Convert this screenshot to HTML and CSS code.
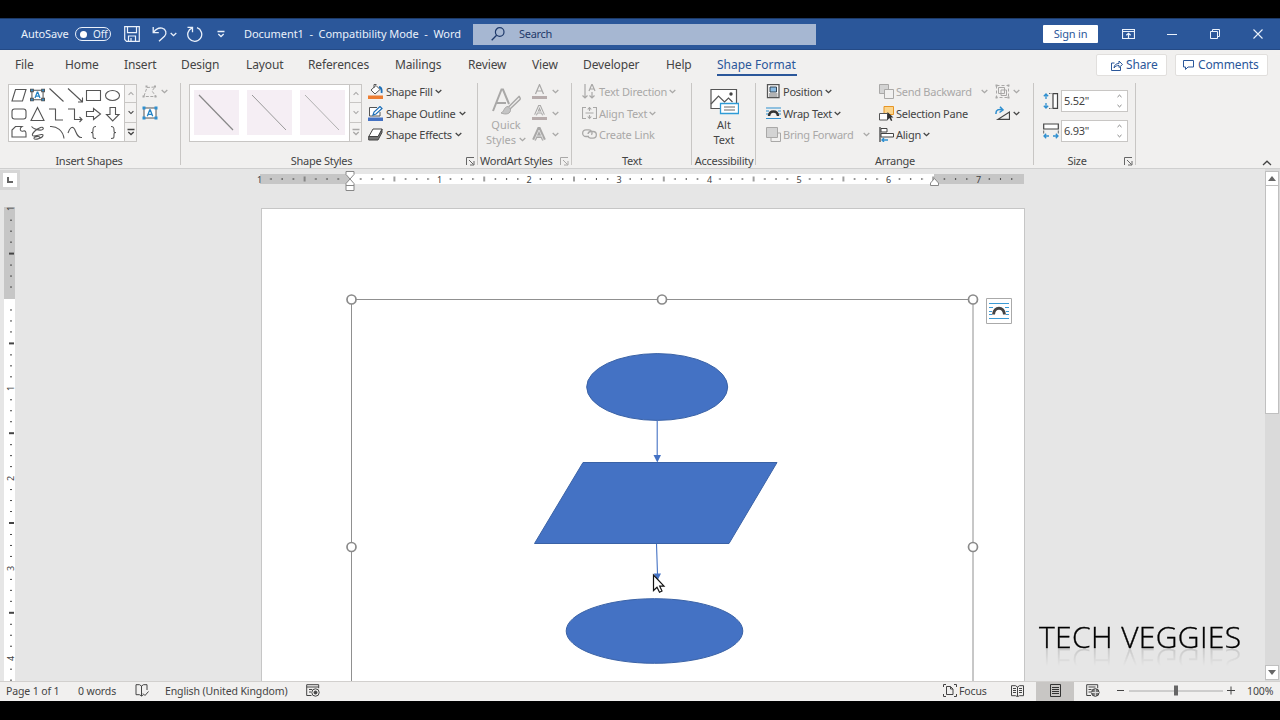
FILE: index.html
```html
<!DOCTYPE html>
<html lang="en">
<head>
<meta charset="utf-8">
<title>Document1 - Compatibility Mode - Word</title>
<link rel="stylesheet" href="styles.css">
</head>
<body>
<svg class="defs" width="0" height="0">
  <symbol id="caret" viewBox="0 0 7 5"><path d="M.7 1 3.5 3.7 6.3 1" fill="none" stroke="currentColor" stroke-width="1.3"/></symbol>
  <symbol id="up" viewBox="0 0 7 5"><path d="M.7 4 3.5 1.3 6.3 4" fill="none" stroke="currentColor" stroke-width="1.3"/></symbol>
  <symbol id="more" viewBox="0 0 8 8"><path d="M.5 1.5h7M1.3 4 4 6.5 6.7 4" fill="none" stroke="currentColor" stroke-width="1.3"/></symbol>
  <symbol id="launch" viewBox="0 0 9 9"><path d="M.5 8V.5H8M3 3l4.5 4.5M8 4v4H4" fill="none" stroke="currentColor"/></symbol>
  <symbol id="textbox" viewBox="0 0 16 14"><path d="M2 2h12v10H2z" fill="#fff" stroke="#555"/><g fill="#2e8fd0"><path d="M.5.5h3v3h-3zM12.500.5h3v3h-3zM.5 10.500h3v3h-3zM12.500 10.500h3v3h-3z"/></g><path d="M5.300 10.300 7.700 4h.6l2.400 6.300M6.300 8.300h3.400" fill="none" stroke="#2484c6" stroke-width="1.300"/></symbol>
</svg>

<div class="app">
  <header class="titlebar">
    <span class="autosave">AutoSave</span>
    <span class="toggle"><i></i>Off</span>
    <svg width="16" height="16" viewBox="0 0 16 16"><path d="M.7.7h14.6v14.6H2.5L.7 13.5zM3.5.7v6h9v-6M4.5 15v-5h7v5M7 15v-3" fill="none" stroke="currentColor" stroke-width="1.2"/></svg>
    <svg width="16" height="16" viewBox="0 0 16 16"><path d="M1.2 1v5.6h5.6M1.5 6.3C4 3 7 1.5 10 2.2c4 1 5.200 5 2.500 8L7 15.200" fill="none" stroke="currentColor" stroke-width="1.3"/></svg>
    <svg width="7" height="5"><use href="#caret"/></svg>
    <svg width="17" height="16" viewBox="0 0 17 16"><path d="M1.500 1.300h5v5M6.200 1.800A7 7 0 1 0 11 1.700" fill="none" stroke="currentColor" stroke-width="1.300"/></svg>
    <svg width="8" height="8"><use href="#more"/></svg>
    <span class="doctitle">Document1&nbsp; -&nbsp; Compatibility Mode&nbsp; -&nbsp; Word</span>
    <div class="search">
      <svg width="14" height="14" viewBox="0 0 14 14"><circle cx="8.700" cy="5" r="4.300" fill="none" stroke="currentColor" stroke-width="1.200"/><path d="M5.600 8.200.7 13.200" stroke="currentColor" stroke-width="1.300"/></svg>
      <span>Search</span>
    </div>
    <span class="signin">Sign in</span>
    <svg width="13" height="10" viewBox="0 0 13 10"><path d="M.5.5h12v9H.5zM.5 2.500h12M6.500 9V4.500M4.300 6.300l2.200-2 2.200 2" fill="none" stroke="currentColor" stroke-width="1.200"/></svg>
    <svg width="10" height="10"><path d="M0 5.500h10" stroke="currentColor"/></svg>
    <svg width="10" height="10" viewBox="0 0 10 10"><path d="M.5 2.500h7v7h-7zM2.500 2.500v-2h7v7h-2" fill="none" stroke="currentColor"/></svg>
    <svg width="10" height="10" viewBox="0 0 10 10"><path d="m.5.5 9 9m0-9-9 9" stroke="currentColor" stroke-width="1.100"/></svg>
  </header>

  <nav class="tabs">
    <span>File</span><span>Home</span><span>Insert</span><span>Design</span><span>Layout</span><span>References</span><span>Mailings</span><span>Review</span><span>View</span><span>Developer</span><span>Help</span><span class="active">Shape Format</span>
    <span class="pill share"><svg width="12" height="11" viewBox="0 0 12 11"><path d="M3.500 3H.5v7.500h9V7M3 8c.2-3 2-4.500 5-4.500V1l3.500 3.500L8 7.500V5.500C6 5.500 4.500 6 3 8z" fill="none" stroke="currentColor"/></svg>Share</span>
    <span class="pill comments"><svg width="11" height="11" viewBox="0 0 11 11"><path d="M.5.5h10v6.500H5L2.500 9.500V7h-2z" fill="none" stroke="currentColor"/></svg>Comments</span>
  </nav>

  <section class="ribbon">
    <div class="group g-insert">
      <div class="body">
        <div class="gallery">
          <svg class="shapes" width="115" height="57" viewBox="0 0 115 57" fill="none" stroke="#555" stroke-width="1.100">
            <path d="M6.500 4.500h10.500l-3.500 11.500H3z"/>
            <path d="m40.500 3.500 14 13M59 3.500l14 13m.5-4v4.500h-4.500"/>
            <path d="M77.500 5.500h14v10h-14z"/><ellipse cx="103.500" cy="10.500" rx="7" ry="5"/>
            <rect x="3" y="24" width="14" height="10" rx="2.500"/>
            <path d="M28.500 22.500 35 35.500H22zM40 24h6.500v11H54M59 24h6.500v10.500H73m-2.500-2.500 2.500 2.500-2.500 2.500"/>
            <path d="M77.500 26.500h7v-3l7 5.500-7 5.500v-3h-7zM101 22.500h5.500v7h3.500L103.700 36 97.500 29.500h3.500z"/>
            <path d="M6.500 41.500h6.500c-3 2-2 5.500 1.500 4.500 2-.5 2.500 1 2.500 3v3H3V45z"/>
            <path d="M22.500 41.500c2 2.500 7 4 10 3.500 3-.7 2-3.500-1-2.500-4 1.300-9 6-8 8 1.300 2 10-2.500 10.500-.5.5 2.500-8 5.500-9 3.500-.7-1.700 5-3 6-1"/>
            <path d="M41 41.500c7-.5 13 4 14 12M59 48c2-6 4.500-7 6.500-4 2 4 3 9 7.500 8.500"/>
            <path d="M87 41.500c-3 0-3 1.500-3 3.500s0 2.500-2 2.500c2 0 2 .5 2 3s0 3 3 3M102 41.500c3 0 3 1.500 3 3.500s0 2.500 2 2.500c-2 0-2 .5-2 3s0 3-3 3"/>
            <use href="#textbox" x="21" y="3.500" width="15" height="13"/>
          </svg>
          <div class="steps"><b class="dim"><svg width="6" height="5"><use href="#up"/></svg></b><b><svg width="6" height="5"><use href="#caret"/></svg></b><b><svg width="8" height="8"><use href="#more"/></svg></b></div>
        </div>
        <div class="edit">
          <span class="dim"><svg width="16" height="13" viewBox="0 0 16 13"><path d="M2 11 5 2.500l8-.5-3 4 4 5.500H2" fill="none" stroke="currentColor" stroke-dasharray="3 1.500"/><path d="M3.500.5h2v2h-2zM12 .5h2v2h-2zM.5 10.500h2v2h-2zM12.500 10.500h2v2h-2z" fill="currentColor"/></svg><svg width="7" height="5"><use href="#caret"/></svg></span>
          <span><svg width="16" height="14"><use href="#textbox"/></svg></span>
        </div>
      </div>
      <div class="label">Insert Shapes</div>
    </div>

    <div class="group g-styles">
      <div class="body">
        <div class="gallery">
          <div class="thumbs">
            <svg width="45" height="45"><path d="m5 5 34 35" stroke="#888" stroke-width="1.200"/></svg>
            <svg width="45" height="45"><path d="m5 5 34 35" stroke="#999"/></svg>
            <svg width="45" height="45"><path d="m5 5 34 35" stroke="#b0b0b0"/></svg>
          </div>
          <div class="steps dim"><b><svg width="6" height="5"><use href="#up"/></svg></b><b><svg width="6" height="5"><use href="#caret"/></svg></b><b><svg width="8" height="8"><use href="#more"/></svg></b></div>
        </div>
        <div class="cmds">
          <span class="cmd"><svg width="15" height="15" viewBox="0 0 15 15"><path d="M0 11.500h15V15H0z" fill="#ed7d31"/><path d="m3 6 5-4.500 4 4L7 10zM6 4V.5h2.500" fill="#fff" stroke="#555"/><path d="M11 3c2.500.5 3 3 2.500 6" fill="none" stroke="#1d6fb8" stroke-width="1.800"/></svg><em>Shape Fill</em><svg width="7" height="5"><use href="#caret"/></svg></span>
          <span class="cmd"><svg width="15" height="15" viewBox="0 0 15 15"><path d="M0 11.500h15V15H0z" fill="#4472c4"/><path d="M9 1.500H1.500v8.500H12V6" fill="#fff" stroke="#555"/><path d="m5 9 1-3 6-5.500 2 2L8 8z" fill="#fff" stroke="#1d6fb8" stroke-width="1.200"/></svg><em>Shape Outline</em><svg width="7" height="5"><use href="#caret"/></svg></span>
          <span class="cmd"><svg width="15" height="13" viewBox="0 0 15 13"><path d="M.7 8.500v3.500h9.300l4-7.500V1l-4 7.500z" fill="#777" stroke="#444"/><path d="M.8 8.500 5 1h9l-4 7.500z" fill="#fff" stroke="#444"/></svg><em>Shape Effects</em><svg width="7" height="5"><use href="#caret"/></svg></span>
        </div>
      </div>
      <div class="label">Shape Styles</div>
      <svg class="launcher" width="9" height="9"><use href="#launch"/></svg>
    </div>

    <div class="group g-wordart dimmed">
      <div class="body">
        <div class="big">
          <svg width="29" height="27" viewBox="0 0 29 27" fill="none" stroke="currentColor"><path d="M1 23 9.500 1.500h1.500L17 16M4 15h10" stroke-width="2"/><path d="m27.500 8-11 11M28.500 11 18 21M27 8l1.500 3" stroke-width="1.500"/><path d="M16 18.500c-4 0-3.500 5-7 6.500 5 2 10 1 9.500-4z" fill="#c4c4c4"/></svg>
          <em>Quick</em><em>Styles <svg width="7" height="5"><use href="#caret"/></svg></em>
        </div>
        <div class="cmds">
          <span class="cmd"><svg width="15" height="16" viewBox="0 0 15 16"><path d="M0 12h15v3H0z" fill="#b7acac"/><path d="M3.500 10 7.500.5 11.500 10M5 7h5" fill="none" stroke="currentColor" stroke-width="1.200"/></svg><svg width="7" height="5"><use href="#caret"/></svg></span>
          <span class="cmd"><svg width="15" height="16" viewBox="0 0 15 16"><path d="M0 12h15v3H0z" fill="#b7acac"/><path d="M3.500 10 7.500 1 11.500 10M5 7h5" fill="none" stroke="currentColor" stroke-width="3"/><path d="M3.500 10 7.500 1 11.500 10M5 7h5" fill="none" stroke="#eee"/></svg><svg width="7" height="5"><use href="#caret"/></svg></span>
          <span class="cmd"><svg width="15" height="16" viewBox="0 0 15 16"><path d="M2 13 7 2l5 11M4.500 9h6" fill="none" stroke="currentColor" stroke-width="4"/><path d="M2.500 13 7 3l4.500 10M4.500 9h6" fill="none" stroke="#ddd"/></svg><svg width="7" height="5"><use href="#caret"/></svg></span>
        </div>
      </div>
      <div class="label">WordArt Styles</div>
      <svg class="launcher" width="9" height="9"><use href="#launch"/></svg>
    </div>

    <div class="group g-text dimmed">
      <div class="body"><div class="cmds">
        <span class="cmd"><svg width="15" height="15" viewBox="0 0 15 15" fill="none" stroke="currentColor"><path d="M3 0v14M.5 11.500 3 14l2.500-2.500M7 7l3-7 3 7M8 5h4M10 8v6M7.500 11.500 10 14l2.500-2.500" stroke-width="1.200"/></svg><em>Text Direction</em><svg width="7" height="5"><use href="#caret"/></svg></span>
        <span class="cmd"><svg width="15" height="13" viewBox="0 0 15 13" fill="none" stroke="currentColor"><path d="M4 .5H.5v11H4M11 .5h3.500v11H11M3.500 6h8M7.500 0v4M7.500 8v4M5.700 2.500l1.800-2 1.800 2M5.700 9.500l1.800 2 1.800-2" stroke-width="1.100"/></svg><em>Align Text</em><svg width="7" height="5"><use href="#caret"/></svg></span>
        <span class="cmd"><svg width="15" height="11" viewBox="0 0 15 11" fill="none" stroke="currentColor" stroke-width="1.300"><path d="M7 7.500H4a3.300 3.300 0 1 1 0-6.700h3a3.200 3.200 0 0 1 2.500 5M6 5a3 3 0 0 1 3-2.500h2a3.300 3.300 0 1 1 0 6.700H8.500A3 3 0 0 1 6 7"/></svg><em>Create Link</em></span>
      </div></div>
      <div class="label">Text</div>
    </div>

    <div class="group g-alt">
      <div class="body"><div class="big">
        <svg width="29" height="27" viewBox="0 0 29 27"><path d="M1 1.500h25.500v19H1z" fill="#fff" stroke="#555" stroke-width="1.200"/><path d="m1 16 7.500-8 6 6 4-4 4 4" fill="none" stroke="#555" stroke-width="1.200"/><circle cx="21" cy="6" r="1.700" fill="#444"/><path d="M10.500 15.500h18v10h-18z" fill="#fff" stroke="#2f9bd6" stroke-width="1.300"/><path d="M14 19h11M14 22h11" stroke="#666"/></svg>
        <em>Alt</em><em>Text</em>
      </div></div>
      <div class="label">Accessibility</div>
    </div>

    <div class="group g-arrange">
      <div class="body">
        <div class="cmds c1">
          <span class="cmd"><svg width="15" height="15" viewBox="0 0 15 15"><path d="M1.500.7h11.500v13H1.500z" fill="#fff" stroke="#555" stroke-width="1.300"/><path d="M4 3h6.500v5H4z" fill="#8abbe2" stroke="#345"/><path d="M3 10h8.500M3 12h8.500" stroke="#666"/></svg><em>Position</em><svg width="7" height="5"><use href="#caret"/></svg></span>
          <span class="cmd"><svg width="15" height="13" viewBox="0 0 15 13"><path d="M0 1h15M0 4h3m9 0h3M0 7h3m9 0h3M0 11.500h15" stroke="#2e8fd0" stroke-width="1.200"/><path d="M3 9c.5-6 8.500-6 9 0" fill="none" stroke="#333" stroke-width="2.500"/></svg><em>Wrap Text</em><svg width="7" height="5"><use href="#caret"/></svg></span>
          <span class="cmd dim"><svg width="15" height="15" viewBox="0 0 15 15"><path d="M.5.5h11v10H.5z" fill="#d3d3d3" stroke="currentColor"/><path d="M5 11v3.500h9.500V6H12" fill="none" stroke="currentColor"/></svg><em>Bring Forward</em><svg width="7" height="5"><use href="#caret"/></svg></span>
        </div>
        <div class="cmds c2">
          <span class="cmd dim"><svg width="15" height="15" viewBox="0 0 15 15"><path d="M.5.5h9v9h-9z" fill="#d3d3d3" stroke="currentColor"/><path d="M5.500 5.500h9v9h-9z" fill="#f1f0ef" stroke="currentColor"/></svg><em>Send Backward</em><svg width="7" height="5"><use href="#caret"/></svg></span>
          <span class="cmd"><svg width="15" height="15" viewBox="0 0 15 15"><path d="M5 .5h9.500v8H5z" fill="#fbd58c" stroke="#e79525"/><path d="M.5 7.500h8v6.500h-8z" fill="#fff" stroke="#555"/><path d="M8.500 6v8l2-2 1.500 3 1.300-.6L12 11.500h2.500z" fill="#333"/></svg><em>Selection Pane</em></span>
          <span class="cmd"><svg width="15" height="15" viewBox="0 0 15 15" fill="none" stroke="#444"><path d="M1 0v15" stroke-width="1.300"/><path d="M2 1.500h6v3.500H2zM2 6.500h12.500v3.500H2z" fill="#fff"/><path d="M3 13h6M5 11l-2 2 2 2" stroke="#2e8fd0" stroke-width="1.400"/></svg><em>Align</em><svg width="7" height="5"><use href="#caret"/></svg></span>
        </div>
        <div class="cmds c3">
          <span class="cmd dim"><svg width="15" height="15" viewBox="0 0 15 15" fill="none" stroke="currentColor"><path d="M1.500 1.500h12v12h-12z" stroke-dasharray="3 2"/><path d="M.5.5h2v2h-2zM12.500.5h2v2h-2zM.5 12.500h2v2h-2zM12.500 12.500h2v2h-2z" fill="currentColor" stroke="none"/><path d="M3.500 3.500h6v6h-6zM6 6h5.500v5.500H6z"/></svg><svg width="7" height="5"><use href="#caret"/></svg></span>
          <span class="cmd"><svg width="15" height="15" viewBox="0 0 15 15" fill="none"><path d="M3 13.300h11.500V6z" stroke="#444" stroke-width="1.200"/><path d="M1 8C.5 4 4 2.500 7.500 4M5 .8 8 4 4.500 6.500" stroke="#2e8fd0" stroke-width="1.500"/></svg><svg width="7" height="5"><use href="#caret"/></svg></span>
        </div>
      </div>
      <div class="label">Arrange</div>
    </div>

    <div class="group g-size">
      <div class="body">
        <div class="field"><svg width="16" height="16" viewBox="0 0 16 16" fill="none"><path d="M3 1v5M3 10v5M.8 3.200 3 1l2.200 2.200M.8 12.800 3 15l2.200-2.200" stroke="#2e8fd0" stroke-width="1.300"/><path d="M6 .5h3M6 15.500h3" stroke="#666" stroke-dasharray="1.500 1"/><path d="M10 .7h4.500v14.600H10z" fill="#fff" stroke="#444" stroke-width="1.200"/></svg><div class="input"><em>5.52"</em><span class="spin"><svg width="5" height="4"><use href="#up"/></svg><svg width="5" height="4"><use href="#caret"/></svg></span></div></div>
        <div class="field"><svg width="16" height="16" viewBox="0 0 16 16" fill="none"><path d="M.7 1h14.600v5H.7z" fill="#fff" stroke="#444" stroke-width="1.200"/><path d="M.7 7.500v3M15.300 7.500v3" stroke="#666"/><path d="M1 13h5M10 13h5M3.200 10.800 1 13l2.200 2.200M12.800 10.800 15 13l-2.200 2.200" stroke="#2e8fd0" stroke-width="1.300"/></svg><div class="input"><em>6.93"</em><span class="spin"><svg width="5" height="4"><use href="#up"/></svg><svg width="5" height="4"><use href="#caret"/></svg></span></div></div>
      </div>
      <div class="label">Size</div>
      <svg class="launcher" width="9" height="9"><use href="#launch"/></svg>
    </div>
    <svg class="collapse" width="10" height="6"><path d="M1 5 5 1.200 9 5" fill="none" stroke="currentColor" stroke-width="1.300"/></svg>
  </section>

  <main class="work">
    <div class="left">
      <div class="tabstop"><svg width="6" height="6"><path d="M1 0v5h5" fill="none" stroke="#666" stroke-width="2"/></svg></div>
      <svg class="vruler" width="11" height="474">
        <defs><pattern id="vt" x="0" y="91.500" width="11" height="89.800" patternUnits="userSpaceOnUse"><path d="M6 11.200h2M6 22.400h2M6 33.700h2M4.500 44.900h5M6 56.100h2M6 67.300h2M6 78.600h2" stroke="#444"/></pattern></defs>
        <path d="M0 0h11v92H0z" fill="#c6c6c6"/><path d="M0 92h11v382H0z" fill="#fff"/>
        <rect width="11" height="474" fill="url(#vt)"/>
        <g><text transform="translate(9.500 4)rotate(-90)">1</text><text transform="translate(9.500 184)rotate(-90)">1</text><text transform="translate(9.500 274)rotate(-90)">2</text><text transform="translate(9.500 364)rotate(-90)">3</text><text transform="translate(9.500 454)rotate(-90)">4</text></g>
      </svg>
    </div>
    <div class="center">
      <svg class="hruler" width="768" height="22">
        <defs><pattern id="ht" x="92.500" y="0" width="89.800" height="14" patternUnits="userSpaceOnUse"><path d="M11.200 7v2M22.400 7v2M33.700 7v2M44.900 5.500v5M56.100 7v2M67.300 7v2M78.600 7v2" stroke="#444"/></pattern></defs>
        <path d="M3 3h764v10H3z" fill="#c6c6c6"/><path d="M93 3h584v10H93z" fill="#fff"/>
        <rect x="5" width="757" height="14" fill="url(#ht)"/>
        <g text-anchor="middle"><text x="2.500" y="11.500">1</text><text x="182.500" y="11.500">1</text><text x="272" y="11.500">2</text><text x="362" y="11.500">3</text><text x="452.500" y="11.500">4</text><text x="542" y="11.500">5</text><text x="631.500" y="11.500">6</text><text x="721.500" y="11.500">7</text></g>
        <path d="M89 .5h8v3L93 8l-4-4.500zM89 12.500 93 8l4 4.500v7h-8zM89 14.500h8M673.500 14.500v-2.500l4-4.500 4 4.500v2.500z" fill="#fff" stroke="#888"/>
      </svg>
      <div class="page">
        <svg width="762" height="472" viewBox="262 209 762 472">
          <path d="M351.500 690V299.500H973V690" fill="none" stroke="#909090"/>
          <g fill="#fff" stroke="#8a8a8a" stroke-width="1.700"><circle cx="351.500" cy="299.500" r="4.500"/><circle cx="662" cy="299.500" r="4.500"/><circle cx="973" cy="299.500" r="4.500"/><circle cx="351.500" cy="547" r="4.500"/><circle cx="973" cy="547" r="4.500"/></g>
          <g fill="#4472c4" stroke="#3a62a6"><ellipse cx="657.200" cy="387" rx="70.500" ry="33.400"/><path d="M583 462.500h194L729 543.500H534.500z"/><ellipse cx="654.500" cy="631" rx="88.300" ry="32.300"/></g>
          <path d="M657.200 421v35M656.500 544l1 30" stroke="#4472c4" stroke-width="1.100"/>
          <path d="M653.500 455h7.500l-3.700 7.500zM653.700 573.500h7.300l-3.500 7z" fill="#4472c4"/>
          <path d="M986.500 298.500h25v25h-25z" fill="#fff" stroke="#aaa"/>
          <path d="M989 303.500h20M989 307.500h4M1005 307.500h4M989 311.500h3M1006 311.500h3M989 314.500h3M1006 314.500h3M989 318.500h20" stroke="#3b9ad5" stroke-width="1.200"/>
          <path d="M993.500 314.500c.5-8.500 10.500-8.500 11 0" fill="none" stroke="#444" stroke-width="3"/>
          <path d="M653.500 575v15.500l3.500-3.300 2.500 5 2.500-1.200-2.300-4.800h4.300z" fill="#fff" stroke="#111" stroke-width="1.200"/>
        </svg>
      </div>
    </div>
    <div class="watermark">TECH VEGGIES</div>
    <div class="scroll"><b><svg width="8" height="5"><path d="M0 5 4 0l4 5z" fill="#666"/></svg></b><i></i><b class="down"><svg width="8" height="5"><path d="m0 0 4 5 4-5z" fill="#666"/></svg></b></div>
  </main>

  <footer class="status">
    <span>Page 1 of 1</span><span>0 words</span>
    <svg width="14" height="13" viewBox="0 0 14 13" fill="none" stroke="currentColor"><path d="M6.500 2 4.500.7H1v10h3.500l2 1.300zM6.500 2 8.500.7H12V6M6.500 12l2-1.300M8 9.500l2 2 3.500-4"/></svg>
    <span>English (United Kingdom)</span>
    <svg width="14" height="13" viewBox="0 0 14 13" fill="none" stroke="currentColor"><path d="M5.500 11.500H.7V.7h12v3.500M.7 3h12M3 5.500h3M3 8h2"/><circle cx="9.500" cy="8.500" r="3.700"/><circle cx="9.500" cy="8.500" r="1.500" fill="currentColor"/></svg>
    <span class="focus"><svg width="14" height="13" viewBox="0 0 14 13" fill="none" stroke="currentColor"><path d="M3 .5H.5V3M11 .5h2.500V3M.5 10v2.500H3M13.500 10v2.500H11M3.500 2.500h4L10 5v5.500H3.500zM7.500 2.500V5H10"/></svg><em>Focus</em></span>
    <span class="view"><svg width="13" height="12" viewBox="0 0 13 12" fill="none" stroke="currentColor"><path d="M6.500 2 4.500.7H.5v10h4l2 1 2-1h4V.7h-4zM6.500 2v9.500M2 3.500h3M2 5.500h3M2 7.500h3M8 3.500h3M8 5.500h3M8 7.500h3"/></svg></span>
    <span class="view on"><svg width="11" height="13" viewBox="0 0 11 13" fill="none" stroke="#333"><path d="M.5.5h10v12H.5zM2 3.500h7M2 5.500h7M2 7.500h7M2 9.500h7"/></svg></span>
    <span class="view"><svg width="14" height="13" viewBox="0 0 14 13" fill="none" stroke="currentColor"><path d="M5 11.500H.7V.7h11v3.500M2.500 3h7M2.500 5.500h3M2.500 8h2.500"/><circle cx="9.300" cy="8.500" r="3.800" fill="#777"/><path d="M5.500 8.500H13M9.300 5v7" stroke="#ddd"/></svg></span>
    <svg class="zoom" width="119" height="13" viewBox="0 0 119 13"><path d="M0 6.500h7M110 6.500h8M114 2.500v8" stroke="#444"/><path d="M12 7h94" stroke="#aaa"/><path d="M57 1.500h4v10h-4z" fill="#666"/></svg>
    <span>100%</span>
  </footer>
</div>
</body>
</html>
```
FILE: styles.css
```css
* { box-sizing: border-box; }
body { margin: 0; background: #000; font-family: "Noto Sans", "Open Sans", sans-serif; font-size: 12px; color: #444; overflow: hidden; }
em { font-style: normal; }
svg { display: block; flex: none; }
.defs { position: absolute; }
.app { width: 1280px; height: 720px; padding: 18px 0 19px; display: flex; flex-direction: column; white-space: nowrap; line-height: 16px; }

.titlebar { height: 32px; flex: none; background: #2b579a; border-top: 1px solid #1c3a68; border-bottom: 1px solid #244a86; color: #eaf1fb; padding-left: 21px; display: grid; align-items: center; grid-template-columns: 54px 49px 28px 18px 16px 31px 27px 229px 570px 79px 45px 43px 43px 20px; }
.autosave { font-size: 11px; letter-spacing: -.1px; }
.toggle { width: 36px; height: 14px; border: 1px solid #eaf1fb; border-radius: 8px; display: flex; align-items: center; gap: 6px; padding-left: 4px; font-size: 10px; line-height: 12px; }
.toggle i { width: 7px; height: 7px; border-radius: 50%; background: #fff; }
.doctitle { font-size: 11px; letter-spacing: -.05px; }
.search { width: 343px; height: 21px; background: #a6b7d2; color: #1f3a6b; display: flex; align-items: center; padding-left: 18px; gap: 14px; font-size: 11px; letter-spacing: -.3px; }
.signin { width: 55px; height: 18px; background: #fff; color: #2b579a; text-align: center; line-height: 18px; font-size: 11px; letter-spacing: -.2px; border-radius: 1px; }

.tabs { height: 30px; flex: none; background: #f1f0ef; padding-left: 15px; display: grid; grid-template-columns: 50px 59px 57px 65px 62px 87px 73px 64px 51px 83px 51px 379px 79px 93px; align-items: start; letter-spacing: -.13px; }
.tabs > span { padding-top: 7px; justify-self: start; height: 26px; }
.tabs .active { color: #2b579a; border-bottom: 2px solid #2b579a; width: 80px; letter-spacing: 0; }
.tabs .pill { margin-top: 4px; padding: 0 0 0 14px; width: 71px; height: 22px; background: #fff; border: 1px solid #e1dfdd; border-radius: 2px; color: #2b579a; display: flex; align-items: center; gap: 3px; }
.tabs .comments { width: 93px; padding-left: 7px; gap: 4px; }

.ribbon { height: 89px; flex: none; background: #f1f0ef; border-bottom: 1px solid #cfcfcf; display: flex; position: relative; font-size: 11px; letter-spacing: -.26px; }
.group { position: relative; padding-top: 1px; flex: none; }
.group::after { content: ""; position: absolute; right: 0; top: 3px; width: 1px; height: 82px; background: #c8c6c4; }
.g-insert { width: 181px; } .g-styles { width: 297px; } .g-wordart { width: 94px; } .g-text { width: 120px; } .g-alt { width: 64px; } .g-arrange { width: 278px; } .g-size { width: 102px; }
.body { height: 71px; display: flex; }
.label { text-align: center; line-height: 18px; }
.g-insert .label { padding-right: 3px; }
.g-wordart .label { text-align: left; padding-left: 2px; }
.g-size .label { padding-right: 16px; }
.g-styles .label { padding-right: 16px; }
.launcher { position: absolute; right: 3px; top: 77px; color: #666; }
.dim, .dimmed .body, .dimmed .launcher { color: #a9a8a7; }
.gallery { display: flex; background: #fff; border: 1px solid #c8c6c4; height: 58px; margin-top: 3px; }
.g-insert .gallery { margin-left: 8px; width: 129px; }
.g-styles .gallery { margin-left: 8px; width: 173px; }
.steps { width: 14px; margin: -1px -1px -1px auto; display: grid; grid-template-rows: repeat(3, 1fr); }
.steps b { border: 1px solid #c8c6c4; border-top-width: 0; background: #f4f3f2; display: grid; place-items: center; }
.steps b:first-child { border-top-width: 1px; }
.edit { margin-left: 5px; display: flex; flex-direction: column; }
.edit span { height: 21.500px; display: flex; align-items: center; gap: 3px; }
.thumbs { display: flex; gap: 8px; padding: 5px 4px; }
.thumbs svg { background: #f5eef4; }
.cmds { display: flex; flex-direction: column; }
.cmd { height: 21.500px; display: flex; align-items: center; gap: 3px; }
.cmd em { padding-top: 1px; }
.g-styles .cmds { margin-left: 6px; }
.big { display: flex; flex-direction: column; align-items: center; padding-top: 7px; line-height: 15px; letter-spacing: 0; }
.big svg { margin-bottom: 2px; }
.big em { display: flex; align-items: center; gap: 3px; }
.big em svg { margin: 0; }
.g-wordart .big { width: 56px; }
.g-wordart .cmd { gap: 5px; margin-left: -2px; }
.g-text .cmds { padding-left: 10px; letter-spacing: -.2px; }
.g-alt .big { width: 64px; }
.c1 { margin-left: 10px; width: 112px; }
.c2 { width: 116px; }
.c1 .dim { width: 104px; }
.c2 .dim { width: 109px; }
.c1 .dim svg:last-child, .c2 .dim svg:last-child { margin-left: auto; }
.g-arrange .body, .g-text .body { gap: 1px; }
.g-arrange .cmd, .g-text .cmd { gap: 2px; }
.g-arrange .body .c3 .cmd { gap: 3px; margin-left: -1px; }
.g-size .body { flex-direction: column; padding: 9px 0 0 9px; gap: 9px; }
.field { display: flex; align-items: center; gap: 2px; height: 21px; }
.input { width: 67px; height: 22px; background: #fff; border: 1px solid #c8c6c4; display: flex; align-items: center; justify-content: space-between; padding: 0 5px 0 2px; }
.spin { display: grid; gap: 6px; color: #777; }
.collapse { position: absolute; right: 8px; bottom: 2px; }

.work { height: 512px; flex: none; background: #e6e6e6; display: flex; position: relative; overflow: hidden; }
.left { width: 257px; display: flex; flex-direction: column; gap: 17px; }
.tabstop { width: 20px; height: 20px; border: 3px solid #d6d6d6; background: #fff; display: grid; place-items: center; margin-top: 1px; }
.vruler { margin-left: 4px; }
.vruler, .hruler rect { shape-rendering: crispEdges; }
.vruler text, .hruler text { font-family: "Noto Sans", sans-serif; font-size: 9px; fill: #444; }
.center { width: 767px; padding-top: 2px; }
.page { margin: 15px 0 0 4px; width: 764px; height: 474px; background: #fff; border: 1px solid #c6c6c6; }
.hruler { overflow: visible; }
.watermark { position: absolute; left: 1039px; top: 448px; font-family: "Open Sans", sans-serif; font-weight: 300; font-size: 30px; line-height: 40px; letter-spacing: .37px; color: #000; -webkit-text-stroke: .35px #000; -webkit-box-reflect: below -17px linear-gradient(transparent 35%, rgba(0,0,0,.2)); }
.scroll { width: 15px; margin-left: auto; background: #dadada; display: flex; flex-direction: column; padding: 2px 1px 1px 0; }
.scroll b { height: 15px; background: #fff; border: 1px solid #c0c0c0; display: grid; place-items: center; }
.scroll i { height: 228px; background: #fff; border: 1px solid #c0c0c0; border-top: 0; }
.scroll .down { margin-top: auto; }

.status { height: 20px; flex: none; background: #f1f0ef; border-top: 1px solid #d2d0ce; padding-left: 6px; display: grid; align-items: center; font-size: 10.500px; letter-spacing: -.12px; grid-template-columns: 72px 57px 30px 141px 637px 56px 37px 38px 43px 130px 30px; line-height: 14px; }
.status > :not(.view) { margin-bottom: 2px; }
.status > svg { position: static; }
.focus { display: flex; align-items: center; gap: 2px; }
.view { width: 37px; height: 19px; padding-bottom: 2px; display: grid; place-items: center; }
.view.on { width: 38px; background: #c8c6c4; }
```
